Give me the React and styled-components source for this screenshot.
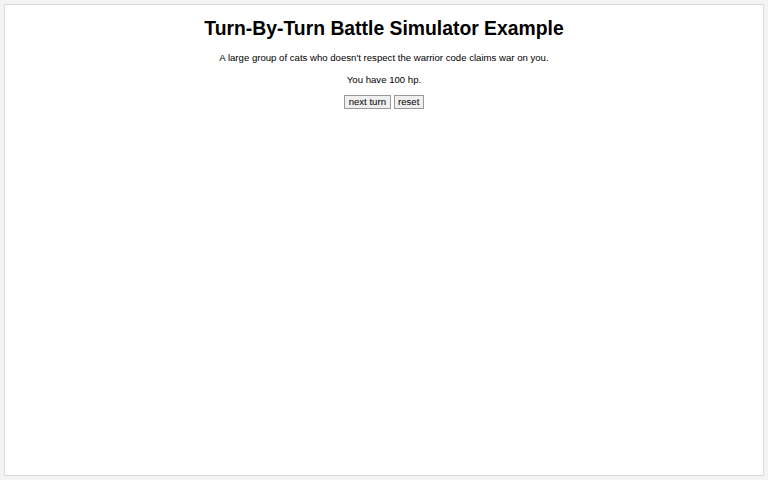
import React, { useState } from "react";
import styled, { createGlobalStyle } from "styled-components";

const Global = createGlobalStyle`
  html, body { margin: 0; padding: 0; }
  body {
    background: #f3f3f3;
    font-family: "Liberation Sans", Arial, sans-serif;
    color: #000;
  }
`;

const Page = styled.div`
  box-sizing: border-box;
  height: 480px;
  padding: 4px;
  display: flex;
`;

const Panel = styled.main`
  flex: 1;
  background: #fff;
  border: 1px solid #dcdcdc;
  display: flex;
  flex-direction: column;
  align-items: center;
  padding-top: 11px;
`;

const Title = styled.h1`
  margin: 0;
  font-size: 19.35px;
  font-weight: bold;
  line-height: 24px;
`;

const Line = styled.p`
  margin: ${(p) => p.$top}px 0 0;
  font-size: 9.6px;
  line-height: 12px;
`;

const Controls = styled.div`
  margin-top: 9px;
  display: flex;
  gap: 3px;
`;

const Button = styled.button`
  font-family: "Liberation Sans", Arial, sans-serif;
  font-size: 9.6px;
  line-height: 12px;
  padding: 0 3.5px;
  background: #efefef;
  border: 1px solid #9a9a9a;
  border-radius: 0;
  color: #000;
  cursor: pointer;
`;

export default function App() {
  const [hp, setHp] = useState(100);
  return (
    <>
      <Global />
      <Page>
        <Panel>
          <Title>Turn-By-Turn Battle Simulator Example</Title>
          <Line $top={12}>
            A large group of cats who doesn't respect the warrior code claims war on you.
          </Line>
          <Line $top={10}>You have {hp} hp.</Line>
          <Controls>
            <Button onClick={() => setHp((h) => Math.max(0, h - 10))}>next turn</Button>
            <Button onClick={() => setHp(100)}>reset</Button>
          </Controls>
        </Panel>
      </Page>
    </>
  );
}
